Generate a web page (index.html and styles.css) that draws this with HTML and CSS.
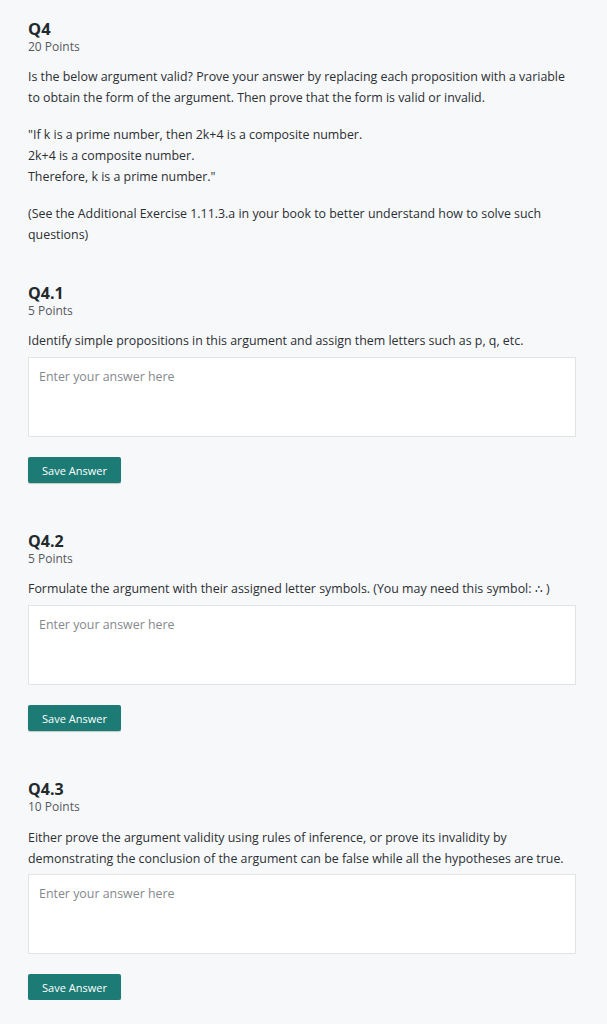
FILE: index.html
```html
<!DOCTYPE html>
<html>
<head>
<meta charset="utf-8">
<link rel="stylesheet" href="styles.css">
</head>
<body>
<main class="page">
  <section class="question">
    <h1 class="q-title">Q4</h1>
    <div class="q-points">20 Points</div>
    <div class="q-body">
      <p>Is the below argument valid? Prove your answer by replacing each proposition with a variable to obtain the form of the argument. Then prove that the form is valid or invalid.</p>
      <p>"If k is a prime number, then 2k+4 is a composite number.<br>2k+4 is a composite number.<br>Therefore, k is a prime number."</p>
      <p>(See the Additional Exercise 1.11.3.a in your book to better understand how to solve such questions)</p>
    </div>
  </section>

  <section class="sub">
    <h2 class="s-title">Q4.1</h2>
    <div class="q-points">5 Points</div>
    <p class="s-text">Identify simple propositions in this argument and assign them letters such as p, q, etc.</p>
    <textarea class="answer" placeholder="Enter your answer here"></textarea>
    <button class="save">Save Answer</button>
  </section>

  <section class="sub">
    <h2 class="s-title">Q4.2</h2>
    <div class="q-points">5 Points</div>
    <p class="s-text">Formulate the argument with their assigned letter symbols. (You may need this symbol: ∴ )</p>
    <textarea class="answer" placeholder="Enter your answer here"></textarea>
    <button class="save">Save Answer</button>
  </section>

  <section class="sub">
    <h2 class="s-title">Q4.3</h2>
    <div class="q-points">10 Points</div>
    <p class="s-text s-text-tight">Either prove the argument validity using rules of inference, or prove its invalidity by demonstrating the conclusion of the argument can be false while all the hypotheses are true.</p>
    <textarea class="answer" placeholder="Enter your answer here"></textarea>
    <button class="save">Save Answer</button>
  </section>
</main>
</body>
</html>
```

FILE: styles.css
```css
html, body {
  margin: 0;
  padding: 0;
  background: #f7f8fa;
}
body {
  font-family: "Open Sans", "Liberation Sans", sans-serif;
  color: #2b2f33;
}
.page {
  padding: 19px 31px 0 28px;
  display: flex;
  flex-direction: column;
}
.q-title {
  margin: 0 0 1px 0;
  font-size: 16.5px;
  line-height: 20px;
  font-weight: 700;
  color: #1f2a2c;
}
.q-points {
  font-size: 12px;
  line-height: 14px;
  color: #555a5e;
}
.q-body {
  margin-top: 12px;
  max-width: 540px;
}
.q-body p {
  margin: 0 0 16px 0;
  font-size: 12.4px;
  line-height: 21px;
}
.sub {
  display: flex;
  flex-direction: column;
  align-items: flex-start;
  margin-top: 22px;
}
.sub + .sub {
  margin-top: 48px;
}
.s-title {
  margin: 0 0 1px 0;
  font-size: 16px;
  line-height: 20px;
  font-weight: 700;
  color: #1f2a2c;
}
.s-text {
  margin: 12px 0 6px 0;
  font-size: 12.4px;
  line-height: 21px;
}
.s-text-tight {
  margin-top: 13px;
  margin-bottom: 5px;
}
.answer {
  box-sizing: border-box;
  width: 548px;
  height: 80px;
  margin: 0;
  padding: 11px 10px;
  border: 1px solid #e1e3e5;
  border-radius: 0;
  background: #fff;
  resize: none;
  font-family: "Open Sans", "Liberation Sans", sans-serif;
  font-size: 12.4px;
  line-height: 16px;
  color: #2b2f33;
  outline: none;
}
.answer::placeholder {
  color: #85898d;
}
.save {
  margin-top: 20px;
  width: 93px;
  height: 26px;
  padding: 0;
  border: none;
  border-radius: 2px;
  background: #1d7b76;
  color: #fff;
  font-family: "Open Sans", "Liberation Sans", sans-serif;
  font-size: 11px;
  box-shadow: 0 1px 1px rgba(0,0,0,0.2);
}
```
